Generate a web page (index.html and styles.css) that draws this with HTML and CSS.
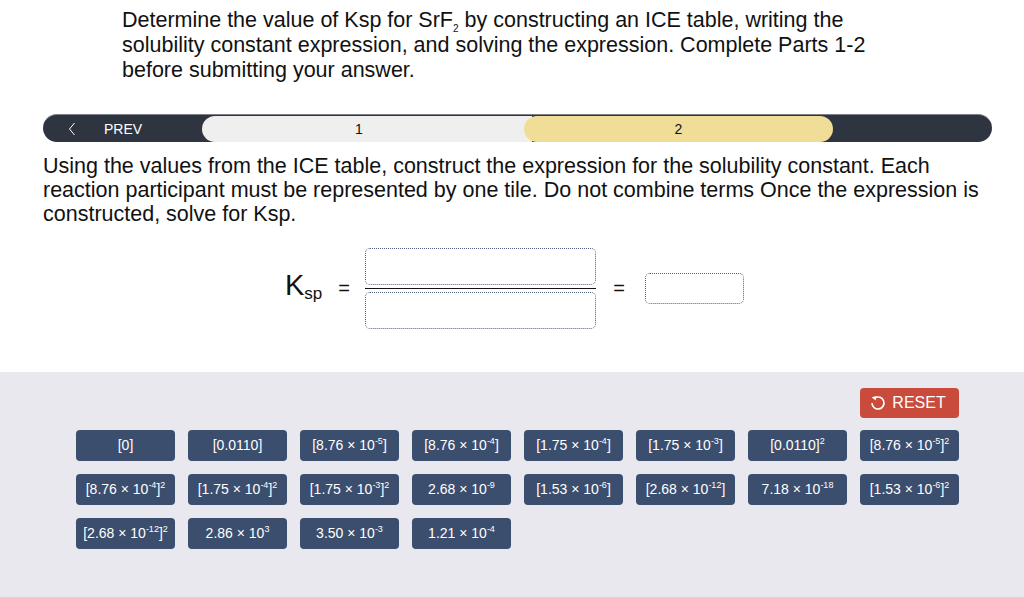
FILE: index.html
```html
<!DOCTYPE html>
<html>
<head>
<meta charset="utf-8">
<link rel="stylesheet" href="styles.css">
</head>
<body>
<div class="page">
  <p class="intro">Determine the value of Ksp for SrF<sub class="isub">2</sub> by constructing an ICE table, writing the solubility constant expression, and solving the expression. Complete Parts 1-2 before submitting your answer.</p>

  <div class="navbar">
    <div class="prev">
      <svg class="chev" width="8" height="14" viewBox="0 0 8 14"><polyline points="6.5,1 1.5,7 6.5,13" fill="none" stroke="#fff" stroke-width="1"/></svg>
      <span class="prev-label">PREV</span>
    </div>
    <div class="segs">
      <div class="seg seg1">1</div>
      <div class="seg seg2">2</div>
    </div>
  </div>

  <p class="question">Using the values from the ICE table, construct the expression for the solubility constant. Each reaction participant must be represented by one tile. Do not combine terms Once the expression is constructed, solve for Ksp.</p>

  <div class="equation">
    <div class="ksp">K<span class="ksub">sp</span></div>
    <div class="eq">=</div>
    <div class="fraction">
      <div class="drop big"></div>
      <div class="bar"></div>
      <div class="drop big"></div>
    </div>
    <div class="eq eq2">=</div>
    <div class="drop small"></div>
  </div>

  <div class="tray">
    <div class="tray-top">
      <button class="reset">
        <svg width="18" height="18" viewBox="0 0 18 18"><path d="M6 3.8 A6 6 0 1 1 3 9" fill="none" stroke="#fff" stroke-width="1.6"/><polygon points="2.6,3.2 7.6,2 6.6,6.6" fill="#fff"/></svg>
        <span>RESET</span>
      </button>
    </div>
    <div class="tiles">
      <div class="tile">[0]</div>
      <div class="tile">[0.0110]</div>
      <div class="tile">[8.76 × 10<sup>-5</sup>]</div>
      <div class="tile">[8.76 × 10<sup>-4</sup>]</div>
      <div class="tile">[1.75 × 10<sup>-4</sup>]</div>
      <div class="tile">[1.75 × 10<sup>-3</sup>]</div>
      <div class="tile">[0.0110]<sup>2</sup></div>
      <div class="tile">[8.76 × 10<sup>-5</sup>]<sup>2</sup></div>
      <div class="tile">[8.76 × 10<sup>-4</sup>]<sup>2</sup></div>
      <div class="tile">[1.75 × 10<sup>-4</sup>]<sup>2</sup></div>
      <div class="tile">[1.75 × 10<sup>-3</sup>]<sup>2</sup></div>
      <div class="tile">2.68 × 10<sup>-9</sup></div>
      <div class="tile">[1.53 × 10<sup>-6</sup>]</div>
      <div class="tile">[2.68 × 10<sup>-12</sup>]</div>
      <div class="tile">7.18 × 10<sup>-18</sup></div>
      <div class="tile">[1.53 × 10<sup>-6</sup>]<sup>2</sup></div>
      <div class="tile">[2.68 × 10<sup>-12</sup>]<sup>2</sup></div>
      <div class="tile">2.86 × 10<sup>3</sup></div>
      <div class="tile">3.50 × 10<sup>-3</sup></div>
      <div class="tile">1.21 × 10<sup>-4</sup></div>
    </div>
  </div>
</div>
</body>
</html>
```

FILE: styles.css
```css
html, body {
  margin: 0;
  padding: 0;
  background: #fff;
}
body {
  font-family: "Liberation Sans", Arial, sans-serif;
  color: #111;
  width: 1024px;
  height: 597px;
  overflow: hidden;
}
.page {
  display: flex;
  flex-direction: column;
  height: 597px;
}
.intro {
  margin: 8px 0 0 122px;
  width: 780px;
  font-size: 21.5px;
  line-height: 25px;
}
.isub {
  font-size: 10px;
  vertical-align: -5px;
  line-height: 0;
}
.navbar {
  margin: 31px 0 0 43px;
  width: 949px;
  height: 28px;
  box-sizing: border-box;
  background: #2f3441;
  border-radius: 14px;
  border-top: 1px solid #7d7f86;
  display: flex;
  align-items: center;
}
.prev {
  width: 159px;
  display: flex;
  align-items: center;
  color: #fff;
  font-size: 14px;
}
.chev {
  margin-left: 25px;
  margin-top: 1px;
}
.prev-label {
  margin-left: 28px;
}
.segs {
  display: flex;
  height: 26px;
  background: linear-gradient(to right, #efefef 0, #efefef 330px, transparent 330px);
  border-radius: 13px 0 0 13px;
}
.seg {
  display: flex;
  align-items: center;
  justify-content: center;
  font-size: 14px;
  color: #111;
  height: 26px;
}
.seg1 {
  width: 314px;
  padding-right: 8px;
}
.seg2 {
  width: 309px;
  background: #f0de98;
  border-radius: 13px;
}
.question {
  margin: 12px 0 0 43px;
  width: 950px;
  font-size: 21.5px;
  line-height: 24px;
}
.equation {
  display: flex;
  align-items: center;
  margin: 22px 0 0 285px;
  height: 81px;
}
.ksp {
  font-size: 29px;
  line-height: 28px;
  margin-top: 2px;
}
.ksub {
  font-size: 17px;
  vertical-align: -4px;
}
.eq {
  font-size: 20px;
  margin-left: 16px;
  width: 10px;
}
.eq2 {
  margin-left: 17px;
}
.fraction {
  display: flex;
  flex-direction: column;
  margin-left: 17px;
}
.drop {
  box-sizing: border-box;
  border: 1px dotted #4e5f80;
  border-radius: 5px;
  background: #fff;
}
.big {
  width: 231px;
  height: 37px;
}
.bar {
  height: 1px;
  background: #111;
  margin: 3px 0 3px;
}
.small {
  width: 99px;
  height: 31px;
  margin-left: 22px;
}
.tray {
  margin-top: 43px;
  flex: 1;
  background: #e9e8ee;
  padding: 16px 0 0 76px;
}
.tray-top {
  width: 883px;
  display: flex;
  justify-content: flex-end;
}
.reset {
  width: 99px;
  height: 30px;
  border: none;
  border-radius: 4px;
  background: #c84b3b;
  color: #fff;
  font-family: "Liberation Sans", Arial, sans-serif;
  font-size: 16px;
  display: flex;
  align-items: center;
  justify-content: center;
  gap: 5px;
  padding: 0 4px 0 0;
}
.tiles {
  margin-top: 12px;
  display: grid;
  grid-template-columns: repeat(8, 99px);
  grid-auto-rows: 31px;
  column-gap: 13px;
  row-gap: 13px;
}
.tile {
  background: #3b4e6e;
  border-radius: 4px;
  color: #fff;
  font-size: 14px;
  display: flex;
  align-items: baseline;
  justify-content: center;
  line-height: 31px;
  white-space: nowrap;
}
.tile sup {
  font-size: 9px;
  position: relative;
  top: -6px;
  line-height: 0;
}
```
